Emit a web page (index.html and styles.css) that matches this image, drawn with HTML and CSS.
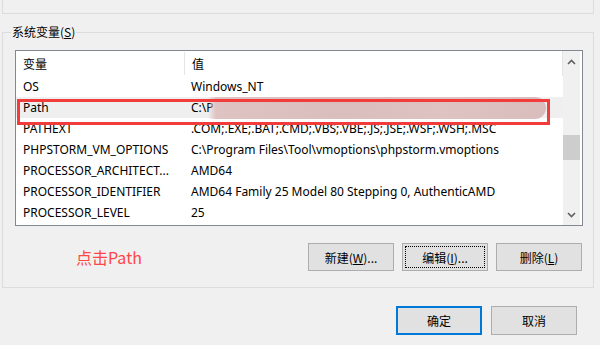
FILE: index.html
```html
<!DOCTYPE html>
<html lang="zh-CN">
<head>
    <meta charset="UTF-8">
    <title>环境变量</title>
    <link rel="stylesheet" href="styles.css">
</head>
<body>
    <div class="top-box"></div>

    <fieldset class="group">
        <legend>系统变量(<u>S</u>)</legend>

        <div class="listbox">
            <div class="grid">
                <div class="head">
                    <div class="cell">变量</div>
                    <div class="cell">值</div>
                </div>
                <div class="row">
                    <div class="cell">OS</div>
                    <div class="cell">Windows_NT</div>
                </div>
                <div class="row selected">
                    <div class="cell">Path</div>
                    <div class="cell">C:\P</div>
                    <span class="blur"></span>
                </div>
                <div class="row">
                    <div class="cell">PATHEXT</div>
                    <div class="cell">.COM;.EXE;.BAT;.CMD;.VBS;.VBE;.JS;.JSE;.WSF;.WSH;.MSC</div>
                </div>
                <div class="row">
                    <div class="cell">PHPSTORM_VM_OPTIONS</div>
                    <div class="cell">C:\Program Files\Tool\vmoptions\phpstorm.vmoptions</div>
                </div>
                <div class="row">
                    <div class="cell">PROCESSOR_ARCHITECT...</div>
                    <div class="cell">AMD64</div>
                </div>
                <div class="row">
                    <div class="cell">PROCESSOR_IDENTIFIER</div>
                    <div class="cell">AMD64 Family 25 Model 80 Stepping 0, AuthenticAMD</div>
                </div>
                <div class="row">
                    <div class="cell">PROCESSOR_LEVEL</div>
                    <div class="cell">25</div>
                </div>
            </div>

            <div class="scrollbar">
                <div class="sb-btn up">
                    <svg width="9" height="6" viewBox="0 0 9 6"><polyline points="1,5 4.5,1.5 8,5" fill="none" stroke="#606060" stroke-width="1.6"/></svg>
                </div>
                <div class="thumb"></div>
                <div class="sb-space"></div>
                <div class="sb-btn down">
                    <svg width="9" height="6" viewBox="0 0 9 6"><polyline points="1,1 4.5,4.5 8,1" fill="none" stroke="#606060" stroke-width="1.6"/></svg>
                </div>
            </div>

            <div class="mark"></div>
        </div>

        <div class="actions">
            <span class="note">点击Path</span>
            <div class="btns">
                <button class="btn">新建(<u>W</u>)...</button>
                <button class="btn focused">编辑(<u>I</u>)...</button>
                <button class="btn">删除(<u>L</u>)</button>
            </div>
        </div>
    </fieldset>

    <div class="footer">
        <button class="btn wide default">确定</button>
        <button class="btn wide">取消</button>
    </div>
</body>
</html>
```

FILE: styles.css
```css
body {
    margin: 0;
    width: 600px;
    height: 345px;
    overflow: hidden;
    background-color: #f0f0f0;
    font-family: "Noto Sans", "Noto Sans CJK SC", sans-serif;
    font-size: 12px;
    color: #000;
}
.top-box {
    box-sizing: border-box;
    width: 592px;
    height: 14px;
    margin-left: 2px;
    border: 1px solid #dcdcdc;
    border-top: none;
}
.group {
    box-sizing: border-box;
    width: 592px;
    margin: 10px 0 0 2px;
    padding: 0 0 16px 0;
    border: 1px solid #dcdcdc;
}
.group legend {
    margin-left: 8px;
    padding: 0 1px;
    line-height: 16px;
    font-family: "Noto Sans CJK SC", sans-serif;
}
.listbox {
    position: relative;
    box-sizing: border-box;
    display: flex;
    width: 568px;
    height: 176px;
    margin: 10px 0 0 12px;
    border: 1px solid #828790;
    background-color: #fff;
}
.grid {
    width: 547px;
}
.head,
.row {
    position: relative;
    display: grid;
    grid-template-columns: 169px 1fr;
}
.head {
    height: 25px;
    border-right: 1px solid #e5e5e5;
    box-sizing: border-box;
    padding: 1px 0;
}
.head .cell {
    line-height: 23px;
    padding-left: 7px;
    font-family: "Noto Sans CJK SC", sans-serif;
}
.head .cell:first-child {
    border-right: 1px solid #e5e5e5;
}
.row {
    height: 21px;
    line-height: 21px;
}
.row .cell {
    padding-left: 7px;
    white-space: nowrap;
    overflow: hidden;
}
.row .cell + .cell {
    padding-left: 6px;
}
.row.selected {
    background-color: #efefef;
}
.blur {
    position: absolute;
    left: 192px;
    top: 0;
    width: 338px;
    height: 22px;
    border-radius: 0 11px 11px 0;
    background: linear-gradient(90deg, rgba(222,190,190,0) 0, #dfc2c2 8px, #dabdbd 40%, #dfc3c3 70%, #d9bcbc 100%);
}
.mark {
    position: absolute;
    left: 1px;
    top: 48px;
    width: 533px;
    height: 26px;
    box-sizing: border-box;
    border: 3px solid #f23b3b;
}
.scrollbar {
    display: flex;
    flex-direction: column;
    width: 17px;
    margin-right: 2px;
    background-color: #f0f0f0;
}
.sb-btn {
    display: flex;
    align-items: center;
    justify-content: center;
}
.sb-btn.up {
    height: 21px;
}
.sb-btn.down {
    height: 20px;
}
.thumb {
    height: 25px;
    margin-top: 63px;
    background-color: #cdcdcd;
}
.sb-space {
    flex: 1;
}
.actions {
    display: flex;
    align-items: center;
    margin-top: 17px;
}
.note {
    margin-left: 73px;
    font-size: 16px;
    color: #ff4545;
    font-family: "Noto Sans CJK SC", sans-serif;
}
.btns {
    display: flex;
    gap: 8px;
    margin: 0 11px 0 auto;
}
.btn {
    position: relative;
    box-sizing: border-box;
    width: 86px;
    height: 28px;
    padding: 0;
    border: 1px solid #adadad;
    background-color: #e1e1e1;
    font-family: "Noto Sans CJK SC", sans-serif;
    font-size: 12px;
    color: #000;
}
.btn.focused::after {
    content: "";
    position: absolute;
    inset: 2px;
    border: 1px dotted #000;
}
.footer {
    display: flex;
    justify-content: flex-end;
    gap: 9px;
    margin-top: 18px;
    padding-right: 23px;
}
.btn.wide {
    height: 29px;
}
.btn.default {
    border: 2px solid #0078d7;
}
```
